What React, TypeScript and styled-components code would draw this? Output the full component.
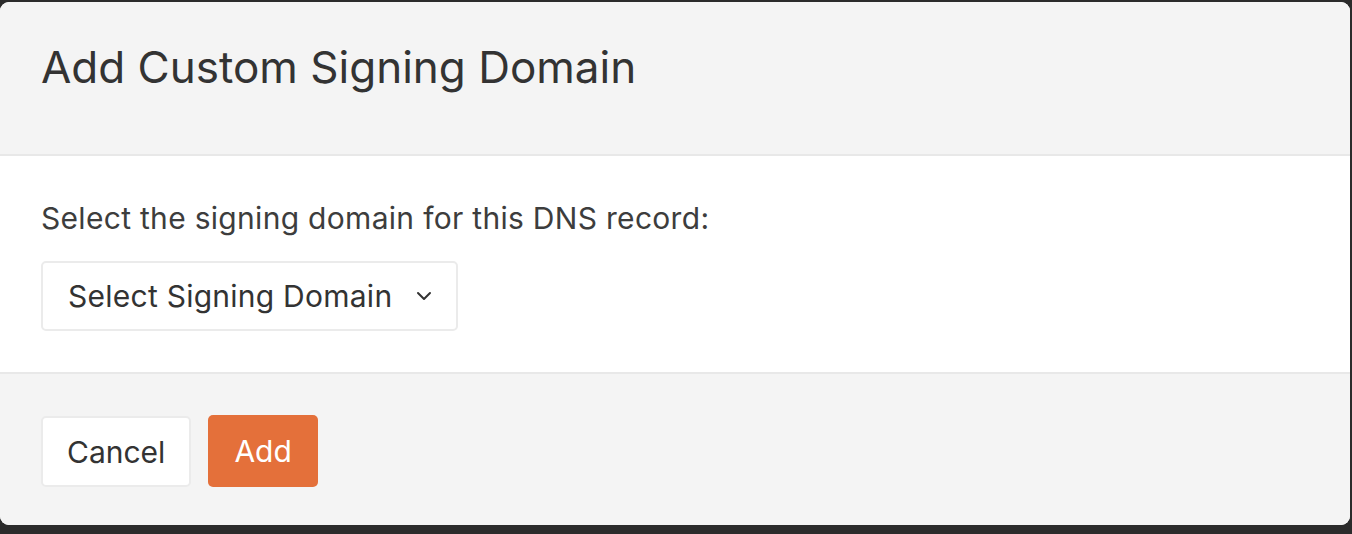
import React from "react";
import styled, { createGlobalStyle } from "styled-components";

const Global = createGlobalStyle`
  html, body { margin: 0; padding: 0; background: #2b2b2b; }
  body { font-family: Inter, "Noto Sans", "Liberation Sans", sans-serif; }
  * { box-sizing: border-box; }
`;

const Page = styled.div`
  width: 1352px;
  height: 534px;
  padding: 2px 2px 9px 0;
  background: #2b2b2b;
`;

const Modal = styled.div`
  height: 100%;
  border-radius: 9px;
  overflow: hidden;
  display: flex;
  flex-direction: column;
  background: #ffffff;
`;

const Header = styled.div`
  height: 154px;
  flex: none;
  background: #f4f4f4;
  border-bottom: 2px solid #e8e8e8;
  padding: 0 41px;
  display: flex;
  align-items: center;
`;

const Title = styled.h2`
  margin: 0;
  margin-top: -22px;
  font-weight: 400;
  font-size: 44px;
  color: #333333;
`;

const Body = styled.div`
  height: 216px;
  flex: none;
  padding: 44px 41px 0;
  display: flex;
  flex-direction: column;
  gap: 25px;
`;

const Label = styled.div`
  font-size: 30px;
  letter-spacing: 0.3px;
  color: #3d3d3d;
  line-height: 36px;
`;

const SelectBox = styled.div`
  width: 417px;
  height: 70px;
  border: 2px solid #ebebeb;
  border-radius: 5px;
  display: flex;
  align-items: center;
  justify-content: space-between;
  padding: 0 24px 0 25px;
  font-size: 30px;
  letter-spacing: 0.25px;
  color: #333333;
`;

const Footer = styled.div`
  flex: 1;
  background: #f4f4f4;
  border-top: 2px solid #e8e8e8;
  padding: 41px 41px 0;
  display: flex;
  align-items: flex-start;
  gap: 17px;
`;

const Button = styled.button<{ $primary?: boolean }>`
  height: ${(p) => (p.$primary ? "72px" : "71px")};
  margin-top: ${(p) => (p.$primary ? "0" : "1px")};
  padding: 0 ${(p) => (p.$primary ? "26px" : "24px")};
  border-radius: 5px;
  font-family: inherit;
  font-size: 30px;
  border: ${(p) => (p.$primary ? "none" : "2px solid #ebebeb")};
  background: ${(p) => (p.$primary ? "#e4703a" : "#ffffff")};
  color: ${(p) => (p.$primary ? "#ffffff" : "#333333")};
  cursor: pointer;
`;

const Chevron = () => (
  <svg width="16" height="10" viewBox="0 0 16 10" fill="none">
    <path d="M2 2l6 6 6-6" stroke="#333" strokeWidth="2" strokeLinecap="round" strokeLinejoin="round" />
  </svg>
);

export default function App() {
  return (
    <>
      <Global />
      <Page>
        <Modal>
          <Header>
            <Title>Add Custom Signing Domain</Title>
          </Header>
          <Body>
            <Label>Select the signing domain for this DNS record:</Label>
            <SelectBox>
              <span>Select Signing Domain</span>
              <Chevron />
            </SelectBox>
          </Body>
          <Footer>
            <Button>Cancel</Button>
            <Button $primary>Add</Button>
          </Footer>
        </Modal>
      </Page>
    </>
  );
}
